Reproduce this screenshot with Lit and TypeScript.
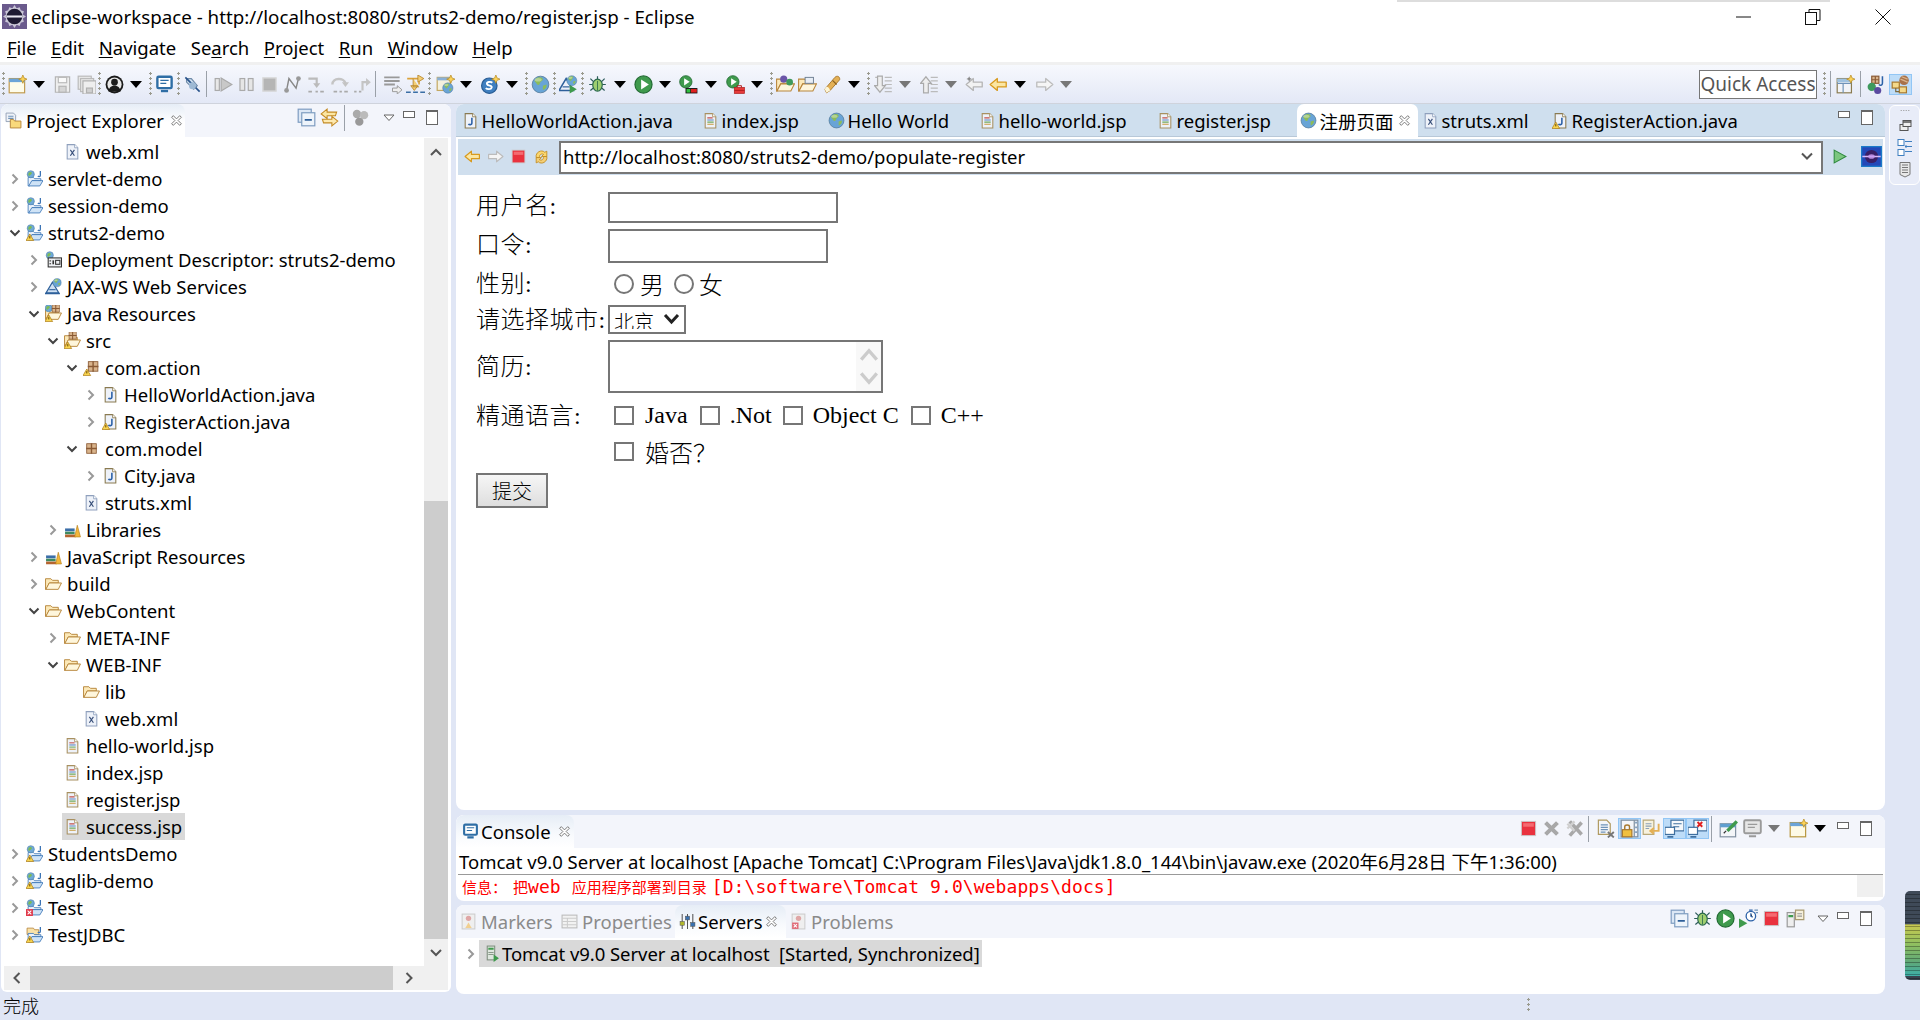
import { LitElement, html, css, svg } from "lit";
import { customElement } from "lit/decorators.js";

const warn = svg`<path d="M3.6 9.4 7.2 15.6H0z" fill="#f8d54e" stroke="#b07d1a" stroke-width=".7"/><path d="M3.6 11.4v2.2" stroke="#5a3d00" stroke-width=".9"/>`;
const err = svg`<rect x="0" y="9.5" width="6.5" height="6.5" fill="#e0394a"/><path d="M1.5 11l3.5 3.5M5 11l-3.5 3.5" stroke="#fff" stroke-width="1"/>`;
const globeSm = svg`<circle cx="4.5" cy="4" r="3.4" fill="#6ea9d8" stroke="#4d7da5" stroke-width=".5"/><path d="M2.5 2.5c1.500-1 3-.5 3 .5s-1.500 1-2 2.500L2 5z" fill="#7dbb55"/>`;
const jmark = svg`<path d="M13.500 1v4.200c0 1.200-1.800 1.200-2.300.4" fill="none" stroke="#3c74b5" stroke-width="1.200"/>`;
const bFolder = svg`<path d="M2 7h5l1 1.200h6V10H6l-2.500 5H2z" fill="#eaf2fb" stroke="#3f79b8" stroke-width=".8"/><path d="M5.500 10H16l-3 5H2.500z" fill="#cfe3f6" stroke="#3f79b8" stroke-width=".8"/>`;
const oFolder = svg`<path d="M.5 3.500h5l1.500 1.500h5.500v2.500H4L1 13.500H.5z" fill="#fce9b8" stroke="#b8863c" stroke-width=".9"/><path d="M4 7.500h11.500L12.500 13.500H.8z" fill="#fef6dc" stroke="#b8863c" stroke-width=".9"/>`;
const pkgShape = svg`<rect x="5" y="2.500" width="9" height="9" fill="#d9b48c" stroke="#8a5a34" stroke-width=".8"/><path d="M9.500 2v10M4.500 7h10" stroke="#8a5a34" stroke-width="1.300"/>`;
const fileBase = (c: string) => svg`<path d="M3 1.500h7l3 3v10.500H3z" fill="#eef2f9" stroke="${c}" stroke-width="1"/><path d="M10 1.500v3h3" fill="#fff" stroke="${c}" stroke-width=".8"/>`;
const jGlyph = svg`<path d="M9.300 5.500v5c0 1.700-2.600 1.700-3.200.6" fill="none" stroke="#2d62a8" stroke-width="1.500"/>`;
const xGlyph = svg`<path d="M6 6.500l3.800 5.500M9.800 6.500L6 12" stroke="#39507a" stroke-width="1.100"/>`;
const jspLines = svg`<path d="M5 5.500h5" stroke="#c2504d"/><path d="M5 7.500h6" stroke="#5a86c2"/><path d="M5 9.500h6" stroke="#6fa85c"/><path d="M5 11.500h6" stroke="#c99a3c"/>`;
const books = svg`<rect x="1" y="10" width="9" height="2.500" fill="#3f8a5f"/><rect x="1" y="7" width="9" height="2.600" fill="#3b6ea8"/><rect x="1" y="12.800" width="10" height="2.500" fill="#b5642f"/><path d="M10 15l2.500-11 3 11z" fill="#f3b63a" stroke="#b57e17" stroke-width=".6"/>`;
const bugBody = svg`<path d="M2 3l3 3M14 3l-3 3M1 8h3M15 8h-3M2 13l3-2.500M14 13l-3-2.500M8 1v3" stroke="#2c5a5a" stroke-width="1"/><ellipse cx="8" cy="8.500" rx="4" ry="5" fill="#9fcf70" stroke="#2c6a4c"/><path d="M8 5v8" stroke="#2c6a4c" stroke-width=".7"/>`;
const runBall = svg`<circle cx="8" cy="8" r="7.200" fill="#3f9a4d" stroke="#226b33"/><path d="M6 3.800v8.400L12.500 8z" fill="#fff"/>`;
const globe = svg`<circle cx="8" cy="8" r="7" fill="#68a4d6" stroke="#53799a" stroke-width=".7"/><path d="M4 3c3-2 6-1 6 .5s-2 1.500-2.500 3.500-2 2-3 0-2.500-1-.5-4zM10 9l3-1c.5 2-1 4.500-3 4.500z" fill="#8cbc5a"/><ellipse cx="6" cy="4" rx="3" ry="1.500" fill="#fff" opacity=".35"/>`;
const star = svg`<path d="M12.500 0l1 2.500 2.500 1-2.500 1-1 2.500-1-2.500-2.500-1 2.500-1z" fill="#fbd35a" stroke="#b98a20" stroke-width=".6"/>`;
const leftArrow = (f: string, s: string) => svg`<path d="M1 8l6-5v3h7.500v4H7v3z" fill="${f}" stroke="${s}" stroke-width="1.100" stroke-linejoin="round"/>`;
const rightArrow = (f: string, s: string) => svg`<path d="M15 8L9 3v3H1.500v4H9v3z" fill="${f}" stroke="${s}" stroke-width="1.100" stroke-linejoin="round"/>`;
const redStop = svg`<rect x="2" y="2" width="12" height="12" fill="#e9323e" stroke="#c9c9c9" stroke-width=".8"/><rect x="3.500" y="3.500" width="9" height="3" fill="#f56a70"/>`;
const monitor = (c: string) => svg`<rect x="2" y="1.500" width="12" height="9.500" rx="1" fill="#fff" stroke="${c}" stroke-width="2"/><path d="M4.500 4.500h7M4.500 7h5" stroke="${c}"/><path d="M5 13.500h6" stroke="${c}" stroke-width="2"/>`;
const collapse = svg`<rect x="1" y="1" width="11" height="11" fill="#dbe7f5" stroke="#7d9cc0"/><rect x="4" y="4" width="11" height="11" fill="#eef4fb" stroke="#7d9cc0"/><path d="M6.500 10h6" stroke="#2e5f99" stroke-width="1.300"/>`;

const ICONS: Record<string, unknown> = {
  new: svg`<rect x="1" y="3" width="13" height="12" fill="#fefcea" stroke="#c19a4e"/><rect x="1" y="3" width="13" height="3" fill="#6ba4d8"/>${star}`,
  save: svg`<path d="M2 1.500h12v13H2z" fill="#eee" stroke="#b5b5b5"/><rect x="4.500" y="2" width="7" height="4.500" fill="#fafafa" stroke="#bbb"/><rect x="5" y="9.500" width="6" height="5" fill="#d5d5d5" stroke="#b5b5b5"/>`,
  saveall: svg`<rect x="1" y="1" width="11" height="11" fill="#e8e8e8" stroke="#bbb"/><rect x="3" y="3" width="11" height="11" fill="#e8e8e8" stroke="#bbb"/><path d="M5 5h11v11H5z" fill="#eee" stroke="#b0b0b0"/><rect x="8" y="11" width="5" height="4" fill="#d0d0d0" stroke="#b0b0b0"/>`,
  person: svg`<circle cx="8" cy="8" r="7.500" fill="#1a1a1a"/><circle cx="8" cy="8" r="6" fill="#e8e8e8"/><circle cx="8" cy="6" r="2.800" fill="#1a1a1a"/><path d="M3 14c0-7 10-7 10 0z" fill="#1a1a1a"/>`,
  monitor: monitor("#2f6ea5"),
  skip: svg`<path d="M3 3l4 0 5 6-3 3-6-6z" fill="#cfe0f0" stroke="#6f8aa8"/><path d="M2 2l12 12" stroke="#28528a" stroke-width="1.300"/><circle cx="8" cy="9" r="3" fill="#9eb9d4"/>`,
  resume: svg`<rect x="1" y="3" width="3.500" height="10" fill="#e8e8e8" stroke="#aaa"/><path d="M6 2.500l9 5.500-9 5.500z" fill="#c8c8c8" stroke="#aaa"/>`,
  pause: svg`<rect x="2.500" y="3" width="4" height="10" fill="#e6e6e6" stroke="#aaa"/><rect x="9.500" y="3" width="4" height="10" fill="#e6e6e6" stroke="#aaa"/>`,
  stopg: svg`<rect x="2.500" y="2.500" width="11" height="11" fill="#b5b5b5" stroke="#d5d5d5" stroke-width="1.200"/>`,
  disc: svg`<path d="M3 13L5 3l6 8 2-8" fill="none" stroke="#888" stroke-width="1.200"/><circle cx="3" cy="13" r="2" fill="#999"/><circle cx="13" cy="3" r="2" fill="#999"/>`,
  into: svg`<path d="M2 3h7v5" fill="none" stroke="#bbb" stroke-width="1.800"/><path d="M6 7h6l-3 4z" fill="#bbb"/><path d="M2 14h3M8 14h2M12 14h3" stroke="#aaa" stroke-width="1.300"/>`,
  over: svg`<path d="M2 8C2 2 12 2 13 7" fill="none" stroke="#c4c4c4" stroke-width="2"/><path d="M10 6h6l-3 4z" fill="#c4c4c4"/><path d="M3 14h3M8 14h2M12 14h3" stroke="#aaa" stroke-width="1.300"/>`,
  ret: svg`<path d="M8 13V6h4" fill="none" stroke="#c4c4c4" stroke-width="1.800"/><path d="M11 2.500v7l4-3.500z" fill="#c4c4c4"/><path d="M1 14h2M5 14h2" stroke="#aaa" stroke-width="1.300"/>`,
  frames: svg`<path d="M1 2h13M1 5h13M1 8h9" stroke="#999" stroke-width="1.600"/><path d="M8 11h4v-2l4 3.500-4 3.500v-2H8z" fill="#eee" stroke="#999" stroke-width=".8"/>`,
  drop: svg`<path d="M1 3h10v5" fill="none" stroke="#dba23a" stroke-width="1.400"/><path d="M10 0l5 3-5 3z" fill="#f4cf76" stroke="#b5842a" stroke-width=".7"/><path d="M6 3v7h5M4 9l3 4 3-4z" fill="#f4cf76" stroke="#b5842a" stroke-width=".7"/><path d="M0 14.500h4M6 14.500h4M12 14.500h4" stroke="#3a6ea5" stroke-width="1.300"/>`,
  wserver: svg`<rect x="1" y="2" width="11" height="11" fill="#f4f0df" stroke="#c4a860"/><rect x="1" y="2" width="11" height="2.500" fill="#8ab0d6"/><g transform="translate(5 6) scale(.62)">${globe}</g>${star}`,
  sclass: svg`<circle cx="7" cy="9" r="6.500" fill="#3f7fc0" stroke="#2a5d94"/><path d="M9.500 6.500c-1-1-5-1-4.500 1s4.500 1 4 3-4 1.500-5 .5" fill="none" stroke="#fff" stroke-width="1.600"/>${star}`,
  globe,
  ws: svg`<path d="M0 13L6 3l6 10z" fill="none" stroke="#2d5f9a" stroke-width="1.300"/><path d="M3 10h6" stroke="#2d5f9a"/><g transform="translate(6 0) scale(.6)">${globe}</g><path d="M9 8.500v7l6-3.500z" fill="#3f9a4d"/>`,
  bug: bugBody,
  run: runBall,
  runext: svg`<g transform="scale(.72)">${runBall}</g><rect x="5.500" y="11" width="10" height="4.500" fill="#111"/><rect x="10" y="11.800" width="5" height="3" fill="#e02020"/><rect x="6.300" y="11.800" width="3.200" height="3" fill="#2fbf3f"/>`,
  runtool: svg`<g transform="scale(.72)">${runBall}</g><rect x="7" y="10.500" width="8.500" height="5" fill="#e63a3a" stroke="#b01e1e" stroke-width=".6"/><path d="M9.500 10.500V9h3.500v1.500M7 13h8.500" stroke="#b01e1e" fill="none" stroke-width=".8"/>`,
  openp: svg`${oFolder}<circle cx="6.500" cy="3.500" r="3" fill="#6a55a8"/><circle cx="11.500" cy="6" r="2.800" fill="#3f9a5d"/>`,
  openf: svg`${oFolder}<rect x="6" y="2" width="7" height="5" fill="#e8eef6" stroke="#6f7f92" stroke-width=".8"/>`,
  pen: svg`<path d="M3 15l-1.500-3L10 2c2-2 4.500-.5 4 2L6 13z" fill="#e4b055" stroke="#a8782c" stroke-width=".8"/><path d="M1.500 12c1-3 3-3 4.500 1L3 15z" fill="#fdf5d6"/><path d="M8 4.500l3.500 3.500" stroke="#8a6120"/>`,
  nexta: svg`<path d="M1 2h3M9 2h6M9 5h6M9 8h6M9 11h6M9 14h6" stroke="#bbb"/><path d="M3 1h4v8h2.500L5 14.500.5 9H3z" fill="#eee" stroke="#aaa"/>`,
  preva: svg`<path d="M9 2h6M9 5h6M9 8h6M9 11h6M9 14h6" stroke="#bbb"/><path d="M3 15h4V7h2.500L5 1.500.5 7H3z" fill="#eee" stroke="#aaa"/>`,
  lastedit: svg`${leftArrow("#f2f2f2", "#b5b5b5")}<path d="M3.500 1l.7 1.600 1.600.7-1.600.7-.7 1.600-.7-1.600L1.200 3.300l1.600-.7z" fill="#888"/>`,
  back: leftArrow("#fbe6a2", "#d89a1e"),
  fwdg: rightArrow("#f5f5f5", "#bcbcbc"),
  perspnew: svg`<rect x="1" y="3" width="12" height="12" fill="#f2f4f8" stroke="#8a7a50"/><path d="M1 7h12M6 7v8" stroke="#6f93b8"/><rect x="1" y="3" width="12" height="3" fill="#9fc2e0"/>${star}`,
  javap: svg`<rect x="4" y="1" width="6" height="6" fill="#d9b48c" stroke="#8a5a34"/><path d="M7 1v6M4 4h6" stroke="#8a5a34"/><path d="M13 1v6c0 2-2 2-3 1" fill="none" stroke="#2d62a8" stroke-width="1.300"/><circle cx="4" cy="10" r="3.500" fill="#3f9a5d"/><circle cx="9" cy="13" r="3" fill="#5a4aa0"/>`,
  serverp: svg`<rect x="1" y="6" width="6" height="5" fill="#f4d98a" stroke="#a8782c"/><rect x="7" y="10" width="6" height="5" fill="#f4d98a" stroke="#a8782c"/><path d="M4 11v3h3" fill="none" stroke="#7a6a40"/><ellipse cx="11" cy="4.500" rx="4" ry="4" fill="#a8714a"/><path d="M8 3.500l6 2.500M9 1.500l5 2" stroke="#d9b48c"/>`,
  explorer: svg`<path d="M1 1h7l2 2v6H1z" fill="#eef2f8" stroke="#8a9ab0" stroke-width=".8"/><path d="M3 4h5M3 6h5" stroke="#6f93b8"/><path d="M5 7h3l1 1.500h6V15H5z" fill="#f9d97c" stroke="#b8863c" stroke-width=".9"/>`,
  link: svg`<path d="M1 5l5-4v2.500h8l-1 3H6V9z" fill="#fbe6a2" stroke="#c48a22" stroke-width=".9"/><path d="M15 11l-5-4v2.500H2l1 3h7V15z" fill="#fde9b0" stroke="#c48a22" stroke-width=".9"/>`,
  filter: svg`<circle cx="5" cy="5" r="3.500" fill="#aaa"/><circle cx="11" cy="6" r="3.500" fill="#bbb"/><circle cx="7" cy="11.500" r="3.500" fill="#999"/>`,
  collapse,
  refresh: svg`<path d="M3 9C2 4 8 1 11 4l2-1v5H8l2-2C8 5 6 6 6 9z" fill="#fbd76e" stroke="#c08a1e" stroke-width=".8"/><path d="M13 8c1 5-5 8-8 5l-2 1V9h5l-2 2c2 1 4 0 4-3z" fill="#f4cf76" stroke="#c08a1e" stroke-width=".8"/>`,
  go: svg`<path d="M3 2l11 6-11 6z" fill="#7cc77f" stroke="#2f8a3f" stroke-width="1"/>`,
  external: svg`<rect x=".5" y=".5" width="15" height="15" fill="#2348b8" stroke="#1c7ac8"/><circle cx="8" cy="8" r="5" fill="#3a1f66"/><path d="M1 8h14" stroke="#d8b8f8" stroke-width="1.200"/><ellipse cx="8" cy="8" rx="2.500" ry="1.800" fill="#c99af0" opacity=".85"/>`,
  redstop: redStop,
  x1: svg`<path d="M3 3l10 10M13 3L3 13" stroke="#a8a8a8" stroke-width="3.400"/>`,
  x2: svg`<path d="M4 2l10 11M14 3L4 14" stroke="#a8a8a8" stroke-width="3"/><path d="M2 4l6 6M8 2L2 8" stroke="#d0d0d0" stroke-width="2"/>`,
  clear: svg`<path d="M2 1h7l3 3v9H2z" fill="#f3f5f8" stroke="#b09a60"/><path d="M4 5h6M4 7h6M4 9h6M4 11h4" stroke="#6f93b8"/><path d="M10 11l5 4.500M15 11l-5 4.500" stroke="#777" stroke-width="1.600"/>`,
  lock: svg`<rect x="1" y="1" width="14" height="14" fill="#f3f5f8" stroke="#7f8f9f"/><path d="M12 1v14" stroke="#7f8f9f"/><path d="M13 3h1M13 7h1M13 11h1" stroke="#3f6f9f" stroke-width="1.500"/><rect x="2" y="9" width="8" height="6" fill="#f0c040" stroke="#a8782c"/><path d="M4 9V6.500c0-2 4-2 4 0V9" fill="none" stroke="#a8782c" stroke-width="1.200"/>`,
  wrap: svg`<path d="M1 1h9v12H1z" fill="#f7f2df" stroke="#b8a878"/><path d="M3 4h5M3 6h5M3 8h3" stroke="#8aa0b8"/><path d="M14 4v6H8M10 7.500L7 10l3 2.500" fill="none" stroke="#e4b055" stroke-width="1.600"/>`,
  conout: svg`<rect x="5" y="1" width="11" height="9" fill="#f5f8fb" stroke="#3f6f9f"/><path d="M7 4h7M7 6.500h5" stroke="#3f6f9f"/><rect x="0" y="7" width="8" height="6" fill="#fff" stroke="#3f6f9f"/><path d="M2 15h5" stroke="#3f6f9f" stroke-width="1.400"/>`,
  conerr: svg`<rect x="5" y="1" width="11" height="9" fill="#f5f8fb" stroke="#3f6f9f"/><path d="M8 2.500l4 4M12 2.500l-4 4" stroke="#e02020" stroke-width="1.600"/><rect x="0" y="7" width="8" height="6" fill="#fff" stroke="#3f6f9f"/><path d="M2 15h5" stroke="#3f6f9f" stroke-width="1.400"/>`,
  pin: svg`<rect x="1" y="4" width="13" height="11" fill="#f3f5f8" stroke="#7f8f9f"/><rect x="1" y="4" width="13" height="3" fill="#5f9fd0"/><path d="M6 9l5-5 3-3 2 2-3 3-5 5z" fill="#3f9a4d"/><path d="M6 10l-2 2" stroke="#333"/>`,
  display: svg`<rect x="1" y="1" width="14" height="11" rx="1" fill="#e6e6e6" stroke="#9a9a9a" stroke-width="1.600"/><path d="M4 4.500h8M4 7h6" stroke="#9a9a9a"/><path d="M5 14.500h6" stroke="#9a9a9a" stroke-width="1.600"/>`,
  opencon: svg`<rect x="1" y="3" width="13" height="12" fill="#fdfae6" stroke="#b8963c"/><rect x="1" y="3" width="13" height="3" fill="#6ba4d8"/>${star}`,
  profile: svg`<circle cx="10" cy="6" r="4" fill="#fff" stroke="#2d62a8" stroke-width="1.100"/><path d="M10 3.500V6l1.500 1M8.500 1h3" stroke="#2d62a8"/><path d="M0 8v8l7-4z" fill="#3f9a4d"/><path d="M13 1h3M14 3h2" stroke="#6f93b8"/>`,
  publish: svg`<rect x="1" y="3" width="6" height="12" fill="#eee" stroke="#999"/><path d="M2 6h4" stroke="#3f9a4d" stroke-width="2"/><path d="M8 1h7v8H8z" fill="#f6f0dc" stroke="#a89a70"/><path d="M9.500 4h4M9.500 6h4" stroke="#999"/>`,
  tgrip: svg`<path d="M1 4h2M5 4h2M9 4h2M13 4h2" stroke="#999" stroke-width="1.400"/>`,
  restorev: svg`<rect x="3" y="7" width="8" height="6" fill="#eee" stroke="#555"/><rect x="6" y="3" width="8" height="6" fill="#eee" stroke="#555"/><path d="M6 4.500h8" stroke="#555" stroke-width="1.500"/>`,
  outline: svg`<rect x="1" y="0" width="6" height="6" fill="#fff" stroke="#3f7fc0"/><rect x="1" y="10" width="6" height="6" fill="#fff" stroke="#3f7fc0"/><path d="M8 2h7M8 12h7M10 7h5" stroke="#3f7fc0"/><rect x="8" y="6" width="2" height="2" fill="#3f7fc0"/>`,
  tasklist: svg`<path d="M3 1h10v12l-5 2.500L3 13z" fill="#e8e8e8" stroke="#777"/><path d="M5 3.500h6M5 6h6M5 8.500h6M5 11h6" stroke="#777"/>`,
  markers: svg`<rect x="2" y="1" width="12" height="14" fill="#efefef" stroke="#cdcdcd"/><circle cx="8" cy="5" r="2.500" fill="#dfa6a6"/><path d="M5 14l3-5 3 5z" fill="#f1cf8f"/>`,
  props: svg`<rect x="1" y="2" width="14" height="12" fill="#f2f2f2" stroke="#bbb"/><path d="M1 5h14M1 8h14M1 11h14M6 5v9" stroke="#ccc"/>`,
  servers: svg`<path d="M3 1v14M8 1v14M13 1v14" stroke="#555"/><rect x="1" y="8" width="4" height="3.500" fill="#b2b82c" stroke="#555" stroke-width=".5"/><rect x="6" y="3" width="4" height="3.500" fill="#3a72b0" stroke="#555" stroke-width=".5"/><rect x="11" y="9" width="4" height="3.500" fill="#3a72b0" stroke="#555" stroke-width=".5"/>`,
  problems: svg`<rect x="2" y="1" width="12" height="14" fill="#efefef" stroke="#cdcdcd"/><circle cx="8" cy="5" r="2.500" fill="#dfa6a6"/><rect x="2" y="9" width="6" height="6" fill="#e06a76"/><path d="M3.500 10.500l3 3M6.500 10.500l-3 3" stroke="#fff"/>`,
  tomcat: svg`<rect x="4" y="1" width="7" height="13" fill="#dfe7df" stroke="#7f8f7f"/><path d="M5 3.500h5" stroke="#3f9a4d" stroke-width="2"/><path d="M5 7h5M5 9h5" stroke="#8a9a8a"/><path d="M10 9v7l5-3.500z" fill="#3f9a4d"/>`,
  project: svg`${bFolder}${globeSm}${jmark}`,
  projectw: svg`${bFolder}${globeSm}${jmark}${warn}`,
  projecte: svg`${bFolder}${globeSm}${jmark}${err}`,
  projectj: svg`<path d="M1 2h6l1 1.500h4V8H1z" fill="#f9e2a8" stroke="#b8863c" stroke-width=".8"/>${bFolder}${jmark}${warn}`,
  dd: svg`${globeSm}<rect x="3" y="6.500" width="12.500" height="8.500" fill="#eef0f3" stroke="#333"/><rect x="4.200" y="8.800" width="1.500" height="1" fill="#333"/><rect x="4.200" y="11.500" width="1.500" height="1" fill="#333"/><rect x="7" y="8.800" width="1.500" height="3.700" fill="#333"/><rect x="10" y="8.800" width="4" height="3.700" fill="none" stroke="#333" stroke-width="1"/>`,
  jaxws: svg`<path d="M1 14L7 4l6 10z" fill="#cfe0f2" stroke="#2d5f9a" stroke-width="1.100"/><path d="M4 11h6" stroke="#2d5f9a"/><rect x="0" y="14" width="14" height="1.300" fill="#2d5f9a"/><g transform="translate(7 0) scale(.55)">${globe}</g>`,
  javares: svg`${oFolder}<g transform="translate(-1 -1)">${globeSm}</g><g transform="translate(3 -2) scale(.75)">${pkgShape}</g>${warn}`,
  src: svg`${oFolder}<g transform="translate(1 -2) scale(.75)">${pkgShape}</g>${warn}`,
  pkgw: svg`${pkgShape}${warn}`,
  pkg: svg`<g transform="translate(-1.500 1)">${pkgShape}</g>`,
  java: svg`${fileBase("#8a7a50")}${jGlyph}`,
  javaw: svg`${fileBase("#8a7a50")}${jGlyph}${warn}`,
  xml: svg`${fileBase("#8fa0bd")}${xGlyph}`,
  jsp: svg`${fileBase("#a89060")}${jspLines}`,
  lib: books,
  folder: oFolder,
  tri: svg`<path d="M1 1h10L6 6.500z" fill="#fff" stroke="#666" stroke-width="1"/>`,
};

type Item = [number, string];

const MAIN_TB: Item[] = [
  [3, "grip"], [17, "new"], [39, "arrow"], [62, "save"], [86, "saveall"], [99, "grip"], [114, "person"], [136, "arrow"],
  [150, "grip"], [164, "monitor"], [178, "grip"], [192, "skip"], [206, "sep"], [223, "resume"], [246, "pause"], [269, "stopg"],
  [292, "disc"], [315, "into"], [339, "over"], [362, "ret"], [375, "sep"], [392, "frames"], [415, "drop"], [429, "grip"],
  [445, "wserver"], [466, "arrow"], [490, "sclass"], [512, "arrow"], [526, "grip"], [540, "globe"], [554, "grip"], [568, "ws"],
  [582, "grip"], [597, "bug"], [620, "arrow"], [643, "run"], [665, "arrow"], [688, "runext"], [711, "arrow"], [735, "runtool"],
  [757, "arrow"], [771, "grip"], [785, "openp"], [807, "openf"], [832, "pen"], [854, "arrow"], [868, "grip"], [883, "nexta"],
  [905, "arrowg"], [929, "preva"], [951, "arrowg"], [974, "lastedit"], [998, "back"], [1020, "arrow"], [1044, "fwdg"], [1066, "arrowg"],
];
const LEFT_TB: Item[] = [[306, "collapse"], [329, "link"], [344, "sep"], [360, "filter"], [389, "tri"], [409, "min"], [432, "max"]];
const EDITOR_TB: Item[] = [[1843, "min"], [1866, "max"]];
const CONSOLE_TB: Item[] = [
  [1528, "redstop"], [1551, "x1"], [1574, "x2"], [1588, "sep"], [1605, "clear"], [1629, "a:lock"], [1651, "wrap"],
  [1674.500, "a:conout"], [1697.500, "a:conerr"], [1711, "sep"], [1728, "pin"], [1752, "display"], [1774, "arrowg"],
  [1798, "opencon"], [1820, "arrow"], [1843, "min"], [1866, "max"],
];
const SERVERS_TB: Item[] = [
  [1679, "collapse"], [1702, "bug"], [1725, "run"], [1748, "profile"], [1771, "redstop"], [1795, "publish"], [1823, "tri"], [1843, "min"], [1866, "max"],
];
const TOOL_WIDTH: Record<string, number> = { grip: 3, sep: 1, arrow: 12, arrowg: 12, tri: 12, min: 12, max: 12 };

const place = (items: Item[], startX: number) => {
  let cur = startX;
  return items.map(([x, name]) => {
    const active = name.startsWith("a:");
    const key = active ? name.slice(2) : name;
    const w = active ? 23 : TOOL_WIDTH[key] ?? 19;
    const ml = x - w / 2 - cur;
    cur = x + w / 2;
    let inner: unknown;
    let cls = "tool";
    if (key === "tri") inner = html`<svg class="trisvg" viewBox="0 0 12 8">${ICONS.tri}</svg>`;
    else if (key in TOOL_WIDTH) cls = "tool " + key;
    else inner = html`<svg class="i18" viewBox="0 0 16 16">${ICONS[key]}</svg>`;
    if (active) cls += " active";
    return html`<span class=${cls} style="margin-left:${ml}px;width:${w}px">${inner}</span>`;
  });
};

const TREE: [number, string, string, string][] = [
  [2, "", "xml", "web.xml"], [0, "c", "project", "servlet-demo"], [0, "c", "project", "session-demo"], [0, "o", "projectw", "struts2-demo"],
  [1, "c", "dd", "Deployment Descriptor: struts2-demo"], [1, "c", "jaxws", "JAX-WS Web Services"], [1, "o", "javares", "Java Resources"],
  [2, "o", "src", "src"], [3, "o", "pkgw", "com.action"], [4, "c", "java", "HelloWorldAction.java"], [4, "c", "javaw", "RegisterAction.java"],
  [3, "o", "pkg", "com.model"], [4, "c", "java", "City.java"], [3, "", "xml", "struts.xml"], [2, "c", "lib", "Libraries"],
  [1, "c", "lib", "JavaScript Resources"], [1, "c", "folder", "build"], [1, "o", "folder", "WebContent"], [2, "c", "folder", "META-INF"],
  [2, "o", "folder", "WEB-INF"], [3, "", "folder", "lib"], [3, "", "xml", "web.xml"], [2, "", "jsp", "hello-world.jsp"], [2, "", "jsp", "index.jsp"],
  [2, "", "jsp", "register.jsp"], [2, "", "jsp", "success.jsp"], [0, "c", "projectw", "StudentsDemo"], [0, "c", "projectw", "taglib-demo"],
  [0, "c", "projecte", "Test"], [0, "c", "projectj", "TestJDBC"],
];

const TABS: [number, number, string, string, boolean?][] = [
  [238.5, 5.5, "java", "HelloWorldAction.java"], [126, 7, "jsp", "index.jsp"], [151, 7, "globe", "Hello World"], [178, 7, "jsp", "hello-world.jsp"],
  [147.5, 7, "jsp", "register.jsp"], [121, 2.5, "globe", "注册页面", true], [126.5, 3.5, "xml", "struts.xml"], [190, 7, "javaw", "RegisterAction.java"],
];

const MENU: [string, string, string][] = [
  ["", "F", "ile"], ["", "E", "dit"], ["", "N", "avigate"], ["Se", "a", "rch"], ["", "P", "roject"], ["", "R", "un"], ["", "W", "indow"], ["", "H", "elp"],
];

const closeX = html`<svg class="close" viewBox="0 0 12 12"><path d="M1.500 3L3 1.500l3 3 3-3L10.500 3l-3 3 3 3L9 10.500l-3-3-3 3L1.500 9l3-3z" fill="#fff" stroke="#777" stroke-width=".9"/></svg>`;
const ico = (n: string) => html`<svg class="i17" viewBox="0 0 16 16">${ICONS[n]}</svg>`;
const chev = (d: string, c = "#666") => html`<svg class="chev" viewBox="0 0 12 12"><path d=${d} fill="none" stroke=${c} stroke-width="2"/></svg>`;

@customElement("app-root")
export class AppRoot extends LitElement {
  static styles = css`
    :host { display: block; width: 1920px; height: 1020px; overflow: hidden; position: relative; background: #e0e6f5; color: #000;
      font-family: "Noto Sans", "Noto Sans CJK SC", sans-serif; font-size: 18.5px; }
    * { box-sizing: border-box; }
    svg { display: block; flex: none; }
    .i18 { width: 19px; height: 19px; }
    .i17 { width: 17px; height: 17px; }
    .trisvg { width: 12px; height: 8px; }
    .titlebar { height: 33px; background: #fff; display: flex; align-items: center; padding: 0 0 0 2px; position: relative; }
    .logo { width: 25px; height: 25px; margin-right: 4px; }
    .title { flex: 1; font-size: 18.75px; white-space: nowrap; }
    .winbtns { display: flex; align-items: center; gap: 54px; margin-right: 29px; }
    .winbtns svg { width: 16px; height: 16px; }
    .shadow { position: absolute; left: 1397px; top: 0; width: 433px; height: 2px; background: #ddd; }
    .menubar { height: 29px; background: #fff; display: flex; align-items: center; gap: 14.5px; padding-left: 7px; }
    .menubar u { text-underline-offset: 2px; }
    .toolbar { height: 42px; border-top: 3px solid #f0f0f0; background: linear-gradient(#f6f8fd, #e3e8f6); display: flex; align-items: center; border-bottom: 1px solid #cfd3dc; }
    .tools { display: flex; align-items: center; flex: none; }
    .headtools { margin-bottom: 6px; }
    .tool { display: flex; align-items: center; justify-content: center; flex: none; height: 21px; }
    .tool.grip { height: 26px; width: 3px; background: radial-gradient(circle, #9a9a8e 1px, transparent 1.300px) 0 0 / 3px 5px repeat-y; }
    .tool.sep { height: 26px; background: #9aa0a8; }
    .tool.arrow::before, .tool.arrowg::before { content: ""; border-left: 6px solid transparent; border-right: 6px solid transparent; border-top: 7px solid #000; }
    .tool.arrowg::before { border-top-color: #777; }
    .tool.min::before { content: ""; width: 12px; height: 5px; border: 1px solid #666; background: #fff; transform: translateY(-3px); }
    .tool.max::before { content: ""; width: 11px; height: 12px; border: 1px solid #666; border-top-width: 2px; background: #fff; }
    .tool.active { background: #bddcf8; outline: 1px solid #92c6f5; outline-offset: -1px; }
    .quick { margin-left: auto; width: 118px; height: 29px; border: 1px solid #777; background: #fff; color: #555; font-size: 19px; display: flex; align-items: center; justify-content: center; white-space: nowrap; }
    .toolbar-end { display: flex; align-items: center; padding-right: 8px; }
    .main { height: 890px; display: flex; }
    .left { width: 450px; height: 888px; margin-left: 1px; background: #fff; border-radius: 8px 8px 6px 6px; display: flex; flex-direction: column; overflow: hidden; }
    .phead { height: 33px; display: flex; align-items: center; background: #f3f5fb; flex: none; }
    .ptab { height: 33px; display: flex; align-items: center; background: linear-gradient(#e6edf6, #fff 55%); border-radius: 8px 8px 0 0; flex: none; white-space: nowrap; }
    .close { width: 13px; height: 13px; }
    .pbody { flex: 1; display: flex; min-height: 0; padding-top: 1px; }
    .tree { flex: 1; min-width: 0; }
    .row { height: 27px; display: flex; align-items: center; white-space: nowrap; }
    .chev { width: 12px; height: 12px; }
    .chevslot { width: 12px; height: 12px; flex: none; }
    .node { display: flex; align-items: center; height: 27px; margin-left: 3px; padding: 0 3px 0 2px; gap: 5px; }
    .node.sel { background: #d9d9d9; }
    .vscroll { width: 24px; margin-right: 3px; background: #f0f0f0; display: flex; flex-direction: column; align-items: center; }
    .vthumb { width: 100%; height: 438px; margin-top: 335px; background: #cdcdcd; }
    .sbtn { height: 27px; width: 100%; display: flex; align-items: center; justify-content: center; flex: none; }
    .sbtn.top { height: 28px; }
    .hscroll { height: 24px; margin: 0 3px 2px 3px; background: #f0f0f0; display: flex; flex: none; }
    .hbtn { width: 26px; display: flex; align-items: center; justify-content: center; }
    .hthumb { width: 363px; background: #cdcdcd; }
    .hbtn.r { width: 32px; }
    .center { width: 1429px; margin-left: 5px; display: flex; flex-direction: column; flex: none; }
    .editor { height: 706px; background: #fff; border-radius: 8px; display: flex; flex-direction: column; overflow: hidden; flex: none; }
    .etabs { height: 33px; background: #cfdfee; display: flex; flex: none; border-bottom: 1px solid #b8c8d8; }
    .etab { height: 33px; display: flex; align-items: center; gap: 3px; flex: none; white-space: nowrap; }
    .etab.active { background: #fff; border-radius: 7px 7px 0 0; }
    .etab.active .close { margin-left: 1px; }
    .etabtools { margin-left: auto; padding-right: 12px; display: flex; align-items: center; }
    .urlbar { height: 36px; margin: 2px 2px 0; background: #d0dfee; display: flex; align-items: center; flex: none; }
    .urlbox { width: 1264px; height: 33px; background: #fff; border: 2px solid #777; display: flex; align-items: center; padding: 0 0 2px 2px; margin-left: 6px; flex: none; }
    .urlbox span { flex: 1; white-space: nowrap; }
    .urlbox svg { margin-right: 8px; }
    .ubtn { display: flex; align-items: center; justify-content: center; flex: none; margin-bottom: 2px; }
    .content { flex: 1; padding: 16px 0 0 20px; font-family: "Liberation Serif", "Noto Sans CJK SC", serif; font-size: 24px; }
    .form { display: grid; grid-template-columns: 132px 1fr; grid-template-rows: 33px 44px 31px 41px 53px 44px 28px; align-items: center; }
    .lab { font-family: "Liberation Serif", "Noto Sans CJK SC", serif; font-weight: 300; letter-spacing: 0.5px; white-space: nowrap; padding-bottom: 4px; }
    .lab.up { padding-bottom: 8px; }
    .input { display: block; height: 31px; border: 2px solid #767676; padding: 0; background: #fff; }
    .u { width: 230px; }
    .p { width: 220px; height: 34px; }
    .opts { display: flex; align-items: center; padding-left: 6px; white-space: nowrap; font-weight: 300; }
    .radio, .check { appearance: none; margin: 0; flex: none; width: 20px; height: 20px; border: 2px solid #767676; background: #fff; }
    .radio { border-radius: 50%; }
    .check { width: 20px; height: 19px; }
    .selwrap { position: relative; width: 78px; height: 29px; }
    .selwrap select { appearance: none; width: 78px; height: 29px; border: 2px solid #767676; background: #fff; border-radius: 0; font-family: "Noto Sans CJK SC", sans-serif; font-weight: 300; font-size: 20px; padding: 0 0 3px 4px; color: #000; }
    .selwrap svg { position: absolute; right: 6px; top: 8px; width: 17px; height: 12px; pointer-events: none; }
    .ta { display: flex; width: 275px; height: 53px; border: 2px solid #767676; }
    .ta textarea { flex: 1; border: 0; padding: 0; resize: none; outline: none; overflow: hidden; }
    .tasb { width: 25px; background: #f8f8f8; display: flex; flex-direction: column; justify-content: center; gap: 9px; align-items: center; }
    .tasb svg { width: 20px; height: 16px; }
    .submit { display: block; width: 72px; height: 35px; margin-top: 8px; border: 2px solid #767676; background: linear-gradient(#f6f6f6, #dedede); font-family: "Noto Sans CJK SC", sans-serif; font-weight: 300; font-size: 20px; color: #000; padding: 0; }
    .console { height: 86px; margin-top: 5px; background: #fff; border-radius: 8px; overflow: hidden; flex: none; display: flex; flex-direction: column; }
    .chead { height: 33px; background: #f3f5fb; display: flex; align-items: center; flex: none; }
    .ctab { background: linear-gradient(#e6edf6, #f8fafd 60%, #fff); height: 33px; display: flex; align-items: center; border-radius: 8px 8px 0 0; flex: none; white-space: nowrap; }
    .proc { height: 27px; margin: 0 2px; border-bottom: 1px solid #999; padding-left: 1px; white-space: nowrap; display: flex; align-items: center; flex: none; }
    .out { flex: 1; display: flex; align-items: center; padding: 0 0 4px 6px; white-space: pre; color: #f00; font-family: "DejaVu Sans Mono", "Noto Sans CJK SC", monospace; font-size: 18px; letter-spacing: 0.08px; }
    .out .cjk { font-family: "Noto Sans CJK SC", sans-serif; font-size: 15px; letter-spacing: 0; }
    .out .ba { margin-left: 6px; }
    .out .path { margin-left: 5px; }
    .out .corner { margin-left: auto; width: 26px; height: 22px; background: #f0f0f0; margin-right: 2px; }
    .servers { height: 89px; margin-top: 4px; background: #fff; border-radius: 8px; overflow: hidden; flex: none; display: flex; flex-direction: column; }
    .stab { height: 33px; display: flex; align-items: center; color: #8a8a8a; flex: none; white-space: nowrap; gap: 4px; }
    .stab.on { color: #000; background: linear-gradient(#e6edf6, #f8fafd 60%, #fff); border-radius: 8px 8px 0 0; gap: 2px; }
    .srow { height: 27px; margin-top: 2px; display: flex; align-items: center; padding-left: 9px; flex: none; white-space: pre; }
    .srow .node { margin-left: 2px; padding: 0 2px 0 4px; gap: 2px; letter-spacing: -0.05px; }
    .trim { width: 31px; height: 80px; margin: 1px 0 0 4px; background: #e8ecf8; border: 1px solid #fff; border-radius: 6px; display: flex; flex-direction: column; align-items: center; padding-top: 2px; gap: 3px; flex: none; }
    .trim svg { width: 16px; height: 19px; }
    .trim .tg { height: 5px; }
    .status { height: 26px; display: flex; align-items: center; padding: 0 0 4px 3px; font-family: "Noto Sans CJK SC", sans-serif; font-size: 18px; font-weight: 300; }
    .sgrip { width: 3px; height: 16px; margin-left: 1488px; background: radial-gradient(circle, #9a9a8e 1px, transparent 1.300px) 0 0 / 3px 5px repeat-y; }
    .meter { position: absolute; left: 1905px; top: 891px; width: 20px; height: 89px; border-radius: 5px 0 0 5px; background: repeating-linear-gradient(transparent 0 3px, rgba(0, 0, 0, .3) 3px 4px), linear-gradient(#3f4a58 0 37%, #c8c850 38%, #8fbf60 60%, #5fa878 80%, #3fb0a8 95%, #3a4450 96%); }
  `;

  render() {
    return html`
      <div class="titlebar">
        <svg class="logo" viewBox="0 0 24 24"><rect width="24" height="24" fill="#6a5a8c"/><path d="M12 1l2 3 3-1 1 3 3 1-1 3 3 2-3 2 1 3-3 1-1 3-3-1-2 3-2-3-3 1-1-3-3-1 1-3-3-2 3-2-1-3 3-1 1-3 3 1z" fill="#c9c6d6"/><circle cx="12" cy="12" r="7.500" fill="#1e1a33"/><path d="M4.500 11h15v2h-15z" fill="#e8e6f0"/></svg>
        <span class="title">eclipse-workspace - http://localhost:8080/struts2-demo/register.jsp - Eclipse</span>
        <span class="winbtns">
          <svg viewBox="0 0 16 16"><path d="M1 8h15" stroke="#111" stroke-width="1"/></svg>
          <svg viewBox="0 0 16 16"><path d="M4 3.500V.5h11v11h-3" fill="none" stroke="#111"/><rect x=".5" y="3.500" width="11" height="12" fill="#fff" stroke="#111"/></svg>
          <svg viewBox="0 0 16 16"><path d="M.5.5l15 15M15.500.5l-15 15" stroke="#111"/></svg>
        </span>
        <div class="shadow"></div>
      </div>
      <div class="menubar">${MENU.map(([a, u, b]) => html`<span>${a}<u>${u}</u>${b}</span>`)}</div>
      <div class="toolbar">
        <div class="tools">${place(MAIN_TB, 0)}</div>
        <div class="quick">Quick Access</div>
        <div class="toolbar-end">
          <div class="tools">${place([[1824, "grip"], [1830, "sep"], [1845, "perspnew"], [1860, "sep"], [1876, "javap"], [1900.500, "a:serverp"]], 1817)}</div>
        </div>
      </div>
      <div class="main">
        <div class="left">
          <div class="phead">
            <div class="ptab" style="width:184px;padding-left:4px;">
              ${ico("explorer")}<span style="margin-left:4px">Project Explorer</span><span style="margin-left:6px">${closeX}</span>
            </div>
            <div class="tools headtools">${place(LEFT_TB, 185)}</div>
          </div>
          <div class="pbody">
            <div class="tree">
              ${TREE.map(([lvl, c, icon, label]) => html`
                <div class="row" style="padding-left:${8 + 19 * lvl}px">
                  <span class="chevslot">${c === "c" ? chev("M3.500 1.500 8 6l-4.500 4.500", "#999") : c === "o" ? chev("M1.500 3.500 6 8l4.500-4.500", "#444") : ""}</span>
                  <span class="node ${label === "success.jsp" ? "sel" : ""}">${ico(icon)}<span>${label}</span></span>
                </div>`)}
            </div>
            <div class="vscroll">
              <div class="sbtn top">${chev("M1 9l5-5 5 5", "#555")}</div>
              <div class="vthumb"></div>
              <div class="sbtn">${chev("M1 3l5 5 5-5", "#555")}</div>
            </div>
          </div>
          <div class="hscroll">
            <div class="hbtn">${chev("M8.500 1 3.500 6l5 5", "#555")}</div>
            <div class="hthumb"></div>
            <div class="hbtn r">${chev("M3.500 1l5 5-5 5", "#555")}</div>
          </div>
        </div>
        <div class="center">
          <div class="editor">
            <div class="etabs">
              ${TABS.map(([w, pad, icon, label, on]) => html`
                <div class="etab ${on ? "active" : ""}" style="width:${w}px;padding-left:${pad}px">${ico(icon)}<span>${label}</span>${on ? closeX : ""}</div>`)}
              <div class="etabtools"><div class="tools headtools">${place(EDITOR_TB, 1830)}</div></div>
            </div>
            <div class="urlbar">
              <span class="ubtn" style="width:24px;margin-left:2px">${ico("back")}</span>
              <span class="ubtn" style="width:23px">${ico("fwdg")}</span>
              <span class="ubtn" style="width:23px">${ico("redstop")}</span>
              <span class="ubtn" style="width:23px">${ico("refresh")}</span>
              <div class="urlbox"><span>http://localhost:8080/struts2-demo/populate-register</span>${chev("M1 3.500 6 8.500l5-5", "#555")}</div>
              <span class="ubtn" style="width:32px">${ico("go")}</span>
              <span class="ubtn" style="width:32px"><svg class="i18" style="width:21px;height:21px" viewBox="0 0 16 16">${ICONS.external}</svg></span>
            </div>
            <div class="content">
              <div class="form">
                <span class="lab up">用户名:</span><input class="input u" />
                <span class="lab up">口令:</span><input class="input p" type="password" />
                <span class="lab">性别:</span>
                <div class="opts"><input class="radio" type="radio" name="g" /><span style="margin-left:6px">男</span><input class="radio" type="radio" name="g" style="margin-left:10px" /><span style="margin-left:5px">女</span></div>
                <span class="lab">请选择城市:</span>
                <div class="selwrap"><select><option>北京</option></select><svg viewBox="0 0 17 12"><path d="M2 2l6.500 7L15 2" fill="none" stroke="#222" stroke-width="3"/></svg></div>
                <span class="lab">简历:</span>
                <div class="ta"><textarea></textarea><div class="tasb">
                  <svg viewBox="0 0 18 14"><path d="M2 12l7-8 7 8" fill="none" stroke="#ccc" stroke-width="3"/></svg>
                  <svg viewBox="0 0 18 14"><path d="M2 2l7 8 7-8" fill="none" stroke="#ccc" stroke-width="3"/></svg>
                </div></div>
                <span class="lab">精通语言:</span>
                <div class="opts">
                  <input class="check" type="checkbox" /><span style="margin-left:11px">Java</span>
                  <input class="check" type="checkbox" style="margin-left:12px" /><span style="margin-left:10px">.Not</span>
                  <input class="check" type="checkbox" style="margin-left:11px" /><span style="margin-left:10px">Object C</span>
                  <input class="check" type="checkbox" style="margin-left:12px" /><span style="margin-left:10px">C++</span>
                </div>
                <span></span>
                <div class="opts"><input class="check" type="checkbox" /><span style="margin-left:11px">婚否？</span></div>
              </div>
              <button class="submit">提交</button>
            </div>
          </div>
          <div class="console">
            <div class="chead">
              <div class="ctab" style="width:118px;padding-left:6px">${ico("monitor")}<span style="margin-left:2px">Console</span><span style="margin-left:7px">${closeX}</span></div>
              <div class="tools headtools">${place(CONSOLE_TB, 574)}</div>
            </div>
            <div class="proc">Tomcat v9.0 Server at localhost [Apache Tomcat] C:\\Program Files\\Java\\jdk1.8.0_144\\bin\\javaw.exe (2020年6月28日 下午1:36:00)</div>
            <div class="out"><span class="cjk">信息：</span><span class="cjk ba">把</span>web <span class="cjk">应用程序部署到目录</span><span class="path">[D:\\software\\Tomcat 9.0\\webapps\\docs]</span><span class="corner"></span></div>
          </div>
          <div class="servers">
            <div class="chead">
              <div class="stab" style="width:105px;padding-left:4px">${ico("markers")}<span>Markers</span></div>
              <div class="stab" style="width:114px;padding-left:0">${ico("props")}<span>Properties</span></div>
              <div class="stab on" style="width:111px;padding-left:4px">${ico("servers")}<span>Servers</span>${closeX}</div>
              <div class="stab" style="width:105px;padding-left:4px">${ico("problems")}<span>Problems</span></div>
              <div class="tools headtools">${place(SERVERS_TB, 891)}</div>
            </div>
            <div class="srow">${chev("M3.500 1.500 8 6l-4.500 4.500", "#999")}<span class="node sel">${ico("tomcat")}<span>Tomcat v9.0 Server at localhost  [Started, Synchronized]</span></span></div>
          </div>
        </div>
        <div class="trim">
          <svg class="tg" viewBox="0 0 16 8">${ICONS.tgrip}</svg>
          <svg viewBox="0 0 16 16">${ICONS.restorev}</svg>
          <svg viewBox="0 0 16 16">${ICONS.outline}</svg>
          <svg viewBox="0 0 16 16">${ICONS.tasklist}</svg>
        </div>
      </div>
      <div class="status"><span>完成</span><span class="sgrip"></span></div>
      <div class="meter"></div>
    `;
  }
}
